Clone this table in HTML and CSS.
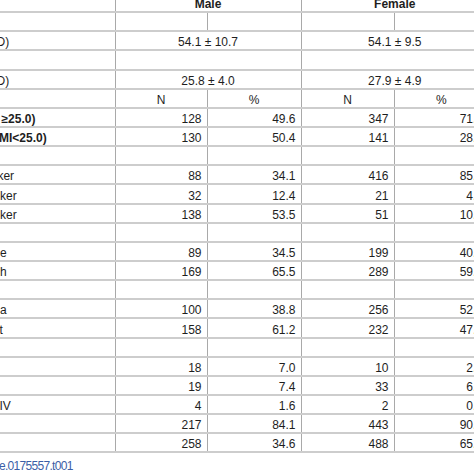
FILE: index.html
```html
<!DOCTYPE html>
<html>
<head>
<meta charset="utf-8">
<link rel="stylesheet" href="styles.css">
</head>
<body>
<div class="page">
<table class="data">
  <colgroup>
    <col class="c-label"><col class="c-n"><col class="c-p"><col class="c-n2"><col class="c-p2">
  </colgroup>
  <tr class="head"><td class="lab"></td><td colspan="2" class="ctr b">Male</td><td colspan="2" class="ctr b">Female</td></tr>
  <tr><td class="lab"></td><td></td><td></td><td></td><td></td></tr>
  <tr><td class="lab"><span class="t" style="margin-left:-3.5px">D)</span></td><td colspan="2" class="ctr">54.1 ± 10.7</td><td colspan="2" class="ctr">54.1 ± 9.5</td></tr>
  <tr><td class="lab"></td><td colspan="2"></td><td colspan="2"></td></tr>
  <tr><td class="lab"><span class="t" style="margin-left:-3.5px">D)</span></td><td colspan="2" class="ctr">25.8 ± 4.0</td><td colspan="2" class="ctr">27.9 ± 4.9</td></tr>
  <tr><td class="lab"></td><td class="ctr">N</td><td class="ctr">%</td><td class="ctr">N</td><td class="ctr">%</td></tr>
  <tr><td class="lab b"><span class="t" style="margin-left:1.5px">≥25.0)</span></td><td>128</td><td>49.6</td><td>347</td><td>71.1</td></tr>
  <tr><td class="lab b"><span class="t" style="margin-left:-1px">MI&lt;25.0)</span></td><td>130</td><td>50.4</td><td>141</td><td>28.9</td></tr>
  <tr><td class="lab"></td><td></td><td></td><td></td><td></td></tr>
  <tr><td class="lab"><span class="t" style="margin-left:-2.6px">ker</span></td><td>88</td><td>34.1</td><td>416</td><td>85.2</td></tr>
  <tr><td class="lab"><span class="t">ker</span></td><td>32</td><td>12.4</td><td>21</td><td>4.3</td></tr>
  <tr><td class="lab"><span class="t">ker</span></td><td>138</td><td>53.5</td><td>51</td><td>10.5</td></tr>
  <tr><td class="lab"></td><td></td><td></td><td></td><td></td></tr>
  <tr><td class="lab"><span class="t">e</span></td><td>89</td><td>34.5</td><td>199</td><td>40.8</td></tr>
  <tr><td class="lab"><span class="t">h</span></td><td>169</td><td>65.5</td><td>289</td><td>59.2</td></tr>
  <tr><td class="lab"></td><td></td><td></td><td></td><td></td></tr>
  <tr><td class="lab"><span class="t">a</span></td><td>100</td><td>38.8</td><td>256</td><td>52.5</td></tr>
  <tr><td class="lab"><span class="t" style="margin-left:-0.5px">t</span></td><td>158</td><td>61.2</td><td>232</td><td>47.5</td></tr>
  <tr><td class="lab"></td><td></td><td></td><td></td><td></td></tr>
  <tr><td class="lab"></td><td>18</td><td>7.0</td><td>10</td><td>2.0</td></tr>
  <tr><td class="lab"></td><td>19</td><td>7.4</td><td>33</td><td>6.8</td></tr>
  <tr><td class="lab"><span class="t" style="margin-left:-0.5px">IV</span></td><td>4</td><td>1.6</td><td>2</td><td>0.4</td></tr>
  <tr><td class="lab"></td><td>217</td><td>84.1</td><td>443</td><td>90.8</td></tr>
  <tr><td class="lab"></td><td>258</td><td>34.6</td><td>488</td><td>65.4</td></tr>
</table>
<div class="doi"><span class="doi-t">e.0175557.t001</span></div>
</div>
</body>
</html>
```
FILE: styles.css
```css
html, body {
  margin: 0;
  padding: 0;
  background: #ffffff;
  overflow: hidden;
}
.page {
  width: 474px;
  height: 474px;
  overflow: hidden;
  font-family: "Liberation Sans", Arial, sans-serif;
  color: #1e1e1e;
}
.data {
  border-collapse: collapse;
  table-layout: fixed;
  width: 488px;
  margin-top: -7px;
  font-size: 12px;
}
.c-label { width: 115px; }
.c-n { width: 92px; }
.c-p { width: 94px; }
.c-n2 { width: 93px; }
.c-p2 { width: 94px; }
.data tr { height: 19.15px; }
.data td {
  height: 17.15px;
  box-sizing: border-box;
  padding: 0 5px 1px 0;
  line-height: 12px;
  text-align: right;
  border-bottom: 2px solid #cdcdcd;
  border-left: 1px solid #a9a9a9;
  white-space: nowrap;
  overflow: hidden;
  vertical-align: bottom;
}
.data td.lab {
  border-left: none;
  text-align: left;
  padding: 0 0 1px 0;
}
.data td.ctr {
  text-align: center;
  padding: 0 0 1px 0;
}
.b { font-weight: bold; }
.t { display: inline-block; }
.doi {
  margin-top: 6px;
  font-size: 12px;
  letter-spacing: -0.7px;
  color: #3c5ea6;
  white-space: nowrap;
}
.doi-t {
  display: inline-block;
  margin-left: -1px;
}
```
